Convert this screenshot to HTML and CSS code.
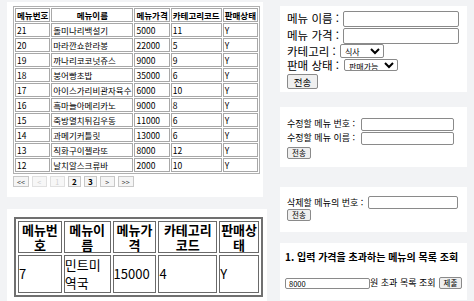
FILE: index.html
```html
<!DOCTYPE html>
<html lang="ko">
<head>
<meta charset="utf-8">
<title>메뉴 관리</title>
<link rel="stylesheet" href="styles.css">
</head>
<body>
<div class="page">
  <div class="left">
    <div class="panel list-panel">
      <table class="menu-table">
        <thead>
          <tr><th>메뉴번호</th><th>메뉴이름</th><th>메뉴가격</th><th>카테고리코드</th><th>판매상태</th></tr>
        </thead>
        <tbody>
          <tr><td>21</td><td>돌미나리백설기</td><td>5000</td><td>11</td><td>Y</td></tr>
          <tr><td>20</td><td>마라깐쇼한라봉</td><td>22000</td><td>5</td><td>Y</td></tr>
          <tr><td>19</td><td>까나리코코넛쥬스</td><td>9000</td><td>9</td><td>Y</td></tr>
          <tr><td>18</td><td>붕어빵초밥</td><td>35000</td><td>6</td><td>Y</td></tr>
          <tr><td>17</td><td>아이스가리비관자육수</td><td>6000</td><td>10</td><td>Y</td></tr>
          <tr><td>16</td><td>흑마늘아메리카노</td><td>9000</td><td>8</td><td>Y</td></tr>
          <tr><td>15</td><td>죽방멸치튀김우동</td><td>11000</td><td>6</td><td>Y</td></tr>
          <tr><td>14</td><td>과메기커틀릿</td><td>13000</td><td>6</td><td>Y</td></tr>
          <tr><td>13</td><td>직화구이젤라또</td><td>8000</td><td>12</td><td>Y</td></tr>
          <tr><td>12</td><td>날치알스크류바</td><td>2000</td><td>10</td><td>Y</td></tr>
        </tbody>
      </table>
      <div class="pager">
        <button class="pg">&lt;&lt;</button>
        <button class="pg" disabled>&lt;</button>
        <button class="pg" disabled>1</button>
        <button class="pg num">2</button>
        <button class="pg num">3</button>
        <button class="pg">&gt;</button>
        <button class="pg">&gt;&gt;</button>
      </div>
    </div>
    <div class="panel detail-panel">
      <table class="detail-table">
        <colgroup>
          <col class="c1"><col class="c2"><col class="c3"><col class="c4"><col class="c5">
        </colgroup>
        <tr><th>메뉴번호</th><th>메뉴이름</th><th>메뉴가격</th><th>카테고리코드</th><th>판매상태</th></tr>
        <tr><td>7</td><td>민트미역국</td><td>15000</td><td>4</td><td>Y</td></tr>
      </table>
    </div>
  </div>
  <div class="right">
    <div class="panel reg-panel">
      <div class="row r1"><label class="lbl-name">메뉴 이름 :</label><input class="in-big" type="text"></div>
      <div class="row r2"><label class="lbl-name">메뉴 가격 :</label><input class="in-big" type="text"></div>
      <div class="row r3"><label class="lbl-cat">카테고리 :</label><select class="sel sel-cat"><option>식사</option></select></div>
      <div class="row r4"><label class="lbl-state">판매 상태 :</label><select class="sel sel-state"><option>판매가능</option></select></div>
      <div class="row r5"><button class="btn btn-big">전송</button></div>
    </div>
    <div class="panel edit-panel">
      <div class="row"><label class="lbl-edit">수정할 메뉴 번호 :</label><input class="in-small" type="text"></div>
      <div class="row"><label class="lbl-edit">수정할 메뉴 이름 :</label><input class="in-small" type="text"></div>
      <div class="row btn-row"><button class="btn">전송</button></div>
    </div>
    <div class="panel del-panel">
      <div class="row"><label class="lbl-del">삭제할 메뉴의 번호 :</label><input class="in-del" type="text"></div>
      <div class="row btn-row"><button class="btn">전송</button></div>
    </div>
    <div class="panel query-panel">
      <h3>1. 입력 가격을 초과하는 메뉴의 목록 조회</h3>
      <div class="row q-row"><input class="in-price" type="text" value="8000"><span class="q-text">원 초과 목록 조회</span><button class="btn">제출</button></div>
    </div>
  </div>
</div>
</body>
</html>
```

FILE: styles.css
```css
html, body {
  margin: 0;
  padding: 0;
  background: #f2f3f5;
  font-family: "Noto Sans CJK KR", "Noto Sans", sans-serif;
  color: #000;
}
.page {
  display: flex;
  align-items: flex-start;
  gap: 13px;
  padding: 2px 0 0 7px;
}
.left {
  width: 260px;
  flex: none;
  display: flex;
  flex-direction: column;
  align-items: flex-start;
  gap: 12px;
}
.right {
  width: 187px;
  flex: none;
  display: flex;
  flex-direction: column;
  padding-top: 4px;
}
.panel {
  background: #fff;
}
.list-panel {
  width: 256px;
  box-sizing: border-box;
  padding: 4px 5px 10px 6px;
}
.menu-table {
  border-collapse: separate;
  border-spacing: 1px;
  border: 1px solid #b0b0b0;
  font-size: 8.5px;
  line-height: 12px;
}
.menu-table th, .menu-table td {
  border: 1px solid #a8a8a8;
  padding: 0 1px;
  text-align: left;
  white-space: nowrap;
}
.menu-table th {
  font-weight: bold;
  text-align: center;
}
.pager {
  display: flex;
  gap: 3px;
  margin-top: 2px;
}
.pg {
  font-family: inherit;
  font-size: 7px;
  line-height: 8px;
  height: 11px;
  min-width: 15px;
  padding: 0 3px;
  border: 1px solid #c8c8c8;
  background: #f5f5f5;
  color: #444;
  border-radius: 0;
}
.pg.num {
  font-size: 8px;
  font-weight: bold;
  color: #000;
  min-width: 13px;
}
.pg:disabled {
  color: #d0d0d0;
  border-color: #e0e0e0;
  background: #f7f7f7;
}
.detail-panel {
  padding: 8px 4px 8px 7px;
}
.detail-table {
  border-collapse: separate;
  border-spacing: 2px;
  border: 2px solid #707070;
  width: 249px;
  font-size: 13px;
}
.detail-table .c1 { width: 44px; }
.detail-table .c2 { width: 47px; }
.detail-table .c3 { width: 44px; }
.detail-table .c4 { width: 59px; }
.detail-table .c5 { width: 40px; }
.detail-table th, .detail-table td {
  border: 1px solid #6a6a6a;
  padding: 0;
}
.detail-table th {
  font-weight: bold;
  text-align: center;
  line-height: 15px;
}
.detail-table td {
  text-align: left;
  line-height: 18px;
}
.row {
  display: flex;
  align-items: center;
}
label, .q-text {
  white-space: nowrap;
  flex: none;
  line-height: 1.1;
}
input, select, button {
  font-family: inherit;
  box-sizing: border-box;
  margin: 0;
  flex: none;
}
input {
  border: 1px solid #8a8a8a;
  border-radius: 2px;
  padding: 0 2px;
  background: #fff;
}
.reg-panel {
  padding: 4px 6px 3px 7px;
  font-size: 11.5px;
}
.lbl-name { width: 56px; }
.lbl-cat { width: 53px; }
.lbl-state { width: 57px; }
.lbl-edit { width: 74px; }
.lbl-del { width: 81px; }
.reg-panel .r1, .reg-panel .r2 { height: 17px; }
.reg-panel .r3, .reg-panel .r4 { height: 14px; }
.reg-panel .r5 { height: 15px; margin-top: 2px; }
.in-big {
  width: 116px;
  height: 16px;
  font-size: 10px;
}
.sel {
  font-size: 8px;
  height: 13px;
  padding: 0;
  border: 1px solid #8a8a8a;
  border-radius: 2px;
  background: #fff;
}
.sel-cat { width: 44px; height: 14px; }
.sel-state { width: 54px; height: 12px; }
.btn {
  font-size: 7.5px;
  height: 12px;
  padding: 0 4px;
  border: 1px solid #8a8a8a;
  border-radius: 2px;
  background: #efefef;
  color: #000;
  line-height: 8px;
  white-space: nowrap;
}
.btn-big {
  font-size: 9.5px;
  height: 15px;
  width: 31px;
}
.edit-panel {
  margin-top: 15px;
  padding: 10px 6px 8px 7px;
  font-size: 9px;
}
.edit-panel .row { height: 14px; }
.edit-panel .btn-row { height: 12px; margin-top: 2px; }
.in-small {
  width: 93px;
  height: 13px;
  font-size: 8px;
}
.del-panel {
  margin-top: 20px;
  padding: 9px 6px 11px 7px;
  font-size: 9px;
}
.del-panel .row { height: 13px; }
.del-panel .btn-row { height: 12px; }
.in-del {
  width: 90px;
  height: 13px;
  font-size: 8px;
}
.query-panel {
  margin-top: 11px;
  padding: 7px 6px 10px 5px;
  font-size: 9px;
}
.query-panel h3 {
  margin: 0 0 12px 0;
  font-size: 10px;
  line-height: 14px;
  font-weight: bold;
  white-space: nowrap;
}
.q-row { height: 14px; }
.in-price {
  width: 85px;
  height: 11px;
  font-size: 7.5px;
  padding: 0 3px;
}
.q-text { margin-right: 3px; }
.q-row .btn { height: 12px; }
```
